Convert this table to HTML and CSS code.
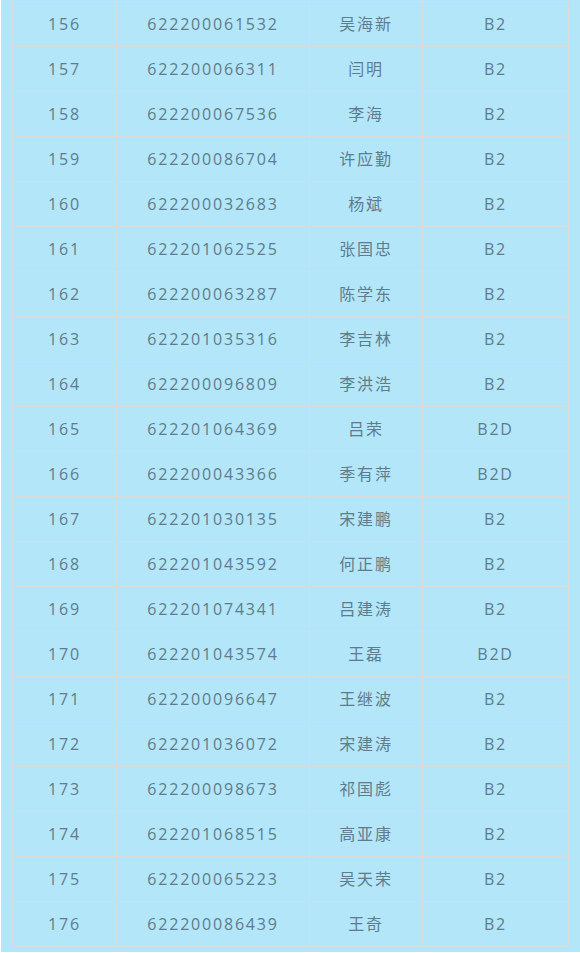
FILE: index.html
```html
<!DOCTYPE html>
<html lang="zh">
<head>
<meta charset="utf-8">
<link rel="stylesheet" href="styles.css">
</head>
<body>
<div class="panel">
<table class="list">
<colgroup><col class="c1"><col class="c2"><col class="c3"><col class="c4"></colgroup>
<tbody>
<tr><td>156</td><td>622200061532</td><td>吴海新</td><td>B2</td></tr>
<tr><td>157</td><td>622200066311</td><td>闫明</td><td>B2</td></tr>
<tr><td>158</td><td>622200067536</td><td>李海</td><td>B2</td></tr>
<tr><td>159</td><td>622200086704</td><td>许应勤</td><td>B2</td></tr>
<tr><td>160</td><td>622200032683</td><td>杨斌</td><td>B2</td></tr>
<tr><td>161</td><td>622201062525</td><td>张国忠</td><td>B2</td></tr>
<tr><td>162</td><td>622200063287</td><td>陈学东</td><td>B2</td></tr>
<tr><td>163</td><td>622201035316</td><td>李吉林</td><td>B2</td></tr>
<tr><td>164</td><td>622200096809</td><td>李洪浩</td><td>B2</td></tr>
<tr><td>165</td><td>622201064369</td><td>吕荣</td><td>B2D</td></tr>
<tr><td>166</td><td>622200043366</td><td>季有萍</td><td>B2D</td></tr>
<tr><td>167</td><td>622201030135</td><td>宋建鹏</td><td>B2</td></tr>
<tr><td>168</td><td>622201043592</td><td>何正鹏</td><td>B2</td></tr>
<tr><td>169</td><td>622201074341</td><td>吕建涛</td><td>B2</td></tr>
<tr><td>170</td><td>622201043574</td><td>王磊</td><td>B2D</td></tr>
<tr><td>171</td><td>622200096647</td><td>王继波</td><td>B2</td></tr>
<tr><td>172</td><td>622201036072</td><td>宋建涛</td><td>B2</td></tr>
<tr><td>173</td><td>622200098673</td><td>祁国彪</td><td>B2</td></tr>
<tr><td>174</td><td>622201068515</td><td>高亚康</td><td>B2</td></tr>
<tr><td>175</td><td>622200065223</td><td>吴天荣</td><td>B2</td></tr>
<tr><td>176</td><td>622200086439</td><td>王奇</td><td>B2</td></tr>
</tbody>
</table>
</div>
</body>
</html>
```
FILE: styles.css
```css
html, body {
  margin: 0;
  padding: 0;
  background: #ffffff;
}
body {
  width: 580px;
  height: 953px;
  overflow: hidden;
}
.panel {
  margin-left: 1px;
  padding: 1px 12px 5px 11px;
  background: #b4e6fa;
}
.list {
  border-collapse: collapse;
  table-layout: fixed;
  width: 556px;
  font-family: "Open Sans", "Noto Sans CJK SC", sans-serif;
  font-size: 16px;
  letter-spacing: 1.8px;
  color: #5e7c8b;
}
.c1 { width: 104px; }
.c2 { width: 193px; }
.c3 { width: 113px; }
.c4 { width: 146px; }
.list td {
  height: 44px;
  padding: 0;
  border: 1px solid #d8dcdc;
  text-align: center;
  vertical-align: middle;
  line-height: 20px;
}
```
